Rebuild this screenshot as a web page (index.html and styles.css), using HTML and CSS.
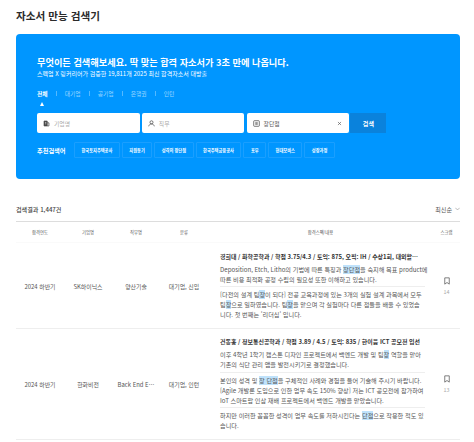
FILE: index.html
```html
<!DOCTYPE html>
<html lang="ko">
<head>
<meta charset="utf-8">
<title>자소서 만능 검색기</title>
<link rel="stylesheet" href="styles.css">
</head>
<body>
<main class="page">
  <h1 class="page-title">자소서 만능 검색기</h1>
  <section class="hero">
    <h2 class="hero-title">무엇이든 검색해보세요. 딱 맞는 합격 자소서가 3초 만에 나옵니다.</h2>
    <p class="hero-sub">스펙업 X 링커리어가 검증한 19,811개 2025 최신 합격자소서 대방출</p>
    <nav class="tabs">
      <span class="tab tab-active">전체</span><i class="tab-sep"></i>
      <span class="tab">대기업</span><i class="tab-sep"></i>
      <span class="tab">공기업</span><i class="tab-sep"></i>
      <span class="tab">은행권</span><i class="tab-sep"></i>
      <span class="tab">인턴</span>
    </nav>
    <div class="caret-row"><i class="caret"></i></div>
    <div class="search">
      <div class="field">
        <svg class="field-icon" viewBox="0 0 10 10"><path d="M1.500 1.500h4.500v7h-4.500z" fill="#444" stroke="#444"/><path d="M6 4h2.500v4.500h-2.500" fill="none" stroke="#444"/><path d="M2.800 3.500h2M2.800 5.500h2" stroke="#fff" stroke-width=".8"/></svg>
        <span class="placeholder">기업명</span>
      </div>
      <div class="field">
        <svg class="field-icon" viewBox="0 0 10 10"><circle cx="5" cy="3.300" r="2.200" fill="none" stroke="#444"/><path d="M1 9c.5-2.200 2-3.300 4-3.300s3.500 1.100 4 3.300" fill="none" stroke="#444"/></svg>
        <span class="placeholder">직무</span>
      </div>
      <div class="field">
        <svg class="field-icon" viewBox="0 0 10 10"><rect x="1" y="1" width="8" height="8" rx="1" fill="none" stroke="#444"/><path d="M3.200 3.500h3.600M3.200 5h3.600M3.200 6.500h3.600" stroke="#444" stroke-width=".8"/></svg>
        <span class="field-value">장단점</span>
        <svg class="clear" viewBox="0 0 8 8"><path d="M1.500 1.500l5 5M6.500 1.500l-5 5" stroke="#555" stroke-width="1"/></svg>
      </div>
      <button class="search-btn">검색</button>
    </div>
    <div class="chips">
      <strong class="chips-label">추천검색어</strong>
      <span class="chip">한국토지주택공사</span>
      <span class="chip">지원동기</span>
      <span class="chip">성격의 장단점</span>
      <span class="chip">한국주택금융공사</span>
      <span class="chip">포부</span>
      <span class="chip">현대모비스</span>
      <span class="chip">성장과정</span>
    </div>
  </section>

  <div class="result-bar">
    <span class="count">검색결과 1,447건</span>
    <span class="sort">최신순
      <svg class="sort-icon" viewBox="0 0 8 5"><path d="M.5.500l3.500 3.500 3.500-3.500" fill="none" stroke="#777" stroke-width=".8"/></svg>
    </span>
  </div>

  <div class="table">
    <div class="row head">
      <span>합격연도</span><span>기업명</span><span>직무명</span><span>분류</span><span>합격스펙/내용</span><span>스크랩</span>
    </div>
    <div class="row item">
      <span>2024 하반기</span><span>SK하이닉스</span><span>양산기술</span><span>대기업, 신입</span>
      <div class="detail">
        <h3 class="spec">경희대 / 화학공학과 / 학점 3.75/4.3 / 토익: 875, 오픽: IH / 수상1회, 대외활…</h3>
        <p class="para">Deposition, Etch, Litho의 기법에 따른 특징과 <mark>장단점</mark>을 숙지해 목표 product에<br>따른 비용 최적화 공정 수립의 필요성 또한 이해하고 있습니다.</p>
        <p class="para">[다전의 설계 팀<mark>장</mark>이 되다] 전공 교육과정에 있는 3개의 실험 설계 과목에서 모두<br>팀<mark>장</mark>으로 일하였습니다. 팀<mark>장</mark>을 맡으며 각 실험마다 다른 점들을 배울 수 있었습<br>니다. 첫 번째는 '리더십' 입니다.</p>
      </div>
      <div class="scrap">
        <svg class="bookmark" viewBox="0 0 8 10"><path d="M1 .8h6v8.400l-3-2.200-3 2.200z" fill="none" stroke="#555" stroke-width="1"/></svg>
        <span>14</span>
      </div>
    </div>
    <div class="row item">
      <span>2024 하반기</span><span>한화비전</span><span class="clip">Back End E…</span><span>대기업, 인턴</span>
      <div class="detail">
        <h3 class="spec">건동홍 / 정보통신공학과 / 학점 3.89 / 4.5 / 토익: 835 / 한이음 ICT 공모전 입선</h3>
        <p class="para">이후 4학년 1학기 캡스톤 디자인 프로젝트에서 백엔드 개발 및 팀<mark>장</mark> 역할을 맡아<br>기존의 식단 관리 앱을 발전시키기로 결정했습니다.</p>
        <p class="para">본인의 성격 및 <mark>장 단점</mark>을 구체적인 사례와 경험을 들어 기술해 주시기 바랍니다.<br>[Agile 개발론 도입으로 인한 업무 속도 150% 향상] 저는 ICT 공모전에 참가하여<br>IoT 스마트팜 인삼 재배 프로젝트에서 백엔드 개발을 맡았습니다.</p>
        <p class="para">하지만 이러한 꼼꼼한 성격이 업무 속도를 저하시킨다는 <mark>단점</mark>으로 작용한 적도 있<br>습니다.</p>
      </div>
      <div class="scrap">
        <svg class="bookmark" viewBox="0 0 8 10"><path d="M1 .8h6v8.400l-3-2.200-3 2.200z" fill="none" stroke="#555" stroke-width="1"/></svg>
        <span>13</span>
      </div>
    </div>
  </div>
</main>
</body>
</html>
```

FILE: styles.css
```css
* { box-sizing: border-box; margin: 0; padding: 0; }
html, body { background: #fff; overflow: hidden; }
body { font-family: "Noto Sans CJK KR", "Noto Sans", sans-serif; color: #333; }
.page { width: 474px; height: 442px; padding: 0 14px 0 16px; overflow: hidden; }

.page-title { font-size: 10.600px; line-height: 16px; font-weight: 700; color: #2b2b2b; padding-top: 8px; height: 34px; }

.hero { height: 145px; background: #0096ff; border-radius: 4px; padding: 22px 21px 0; color: #fff; }
.hero-title { font-size: 9.200px; line-height: 13px; font-weight: 700; }
.hero-sub { font-size: 6px; line-height: 9px; }
.tabs { display: flex; align-items: center; margin-top: 10px; height: 11px; font-size: 5.800px; }
.tab { color: #9ed6ff; }
.tab-active { color: #fff; font-weight: 700; }
.tab-sep { width: 1px; height: 5px; background: #55b9ff; margin: 0 8px; }
.caret-row { height: 14px; padding: 3px 0 0 3px; }
.caret { display: block; width: 0; height: 0; border-left: 2.500px solid transparent; border-right: 2.500px solid transparent; border-bottom: 4px solid #fff; }

.search { display: flex; height: 20px; }
.field { width: 102.500px; margin-right: 2.300px; background: #fff; border-radius: 2px; display: flex; align-items: center; padding: 0 6px; font-size: 5.800px; }
.field-icon { width: 7px; height: 7px; margin-right: 4px; flex: none; }
.placeholder { color: #aaa; }
.field-value { color: #555; flex: 1; }
.clear { width: 5px; height: 5px; flex: none; margin-right: 1px; }
.search-btn { width: 36px; height: 20px; margin-left: -1px; border: 0; background: #0a82dc; color: #fff; font: 700 6px "Noto Sans CJK KR", sans-serif; }

.chips { display: flex; align-items: center; gap: 2px; margin-top: 9px; height: 16px; }
.chips-label { font-size: 6.200px; font-weight: 700; width: 35px; flex: none; }
.chip { height: 16px; line-height: 14px; padding: 0 6.500px; border: 1px solid #1a9fff; border-radius: 1px; font-size: 4.200px; font-weight: 700; color: #fff; }

.result-bar { display: flex; justify-content: space-between; align-items: center; height: 42px; padding-top: 18px; font-size: 6.100px; color: #444; }
.count { font-weight: 500; }
.sort { display: flex; align-items: center; gap: 3px; color: #555; }
.sort-icon { width: 5px; height: 4px; }

.table { border-top: 1px solid #ddd; }
.row { display: grid; grid-template-columns: 48px 48px 48px 48px 225px 27px; align-items: center; text-align: center; }
.head { height: 21px; font-size: 4.300px; color: #555; border-bottom: 1px solid #fafafa; }
.item { font-size: 5.900px; color: #555; border-bottom: 1px solid #eee; padding: 7.500px 0 6px; }
.clip { white-space: nowrap; }

.detail { text-align: left; padding: 0 8px 0 12px; }
.spec { font-size: 5.950px; line-height: 11px; font-weight: 700; color: #333; white-space: nowrap; }
.para { font-size: 6.150px; line-height: 10px; color: #555; white-space: nowrap; padding: 3px 0 1.500px; border-bottom: 1px solid #eee; }
.para:last-child { border-bottom: 0; }
mark { background: #bfe2fb; color: #555; }

.scrap { display: flex; flex-direction: column; align-items: center; gap: 3px; font-size: 5.400px; color: #aaa; }
.bookmark { width: 6px; height: 8px; }
```
